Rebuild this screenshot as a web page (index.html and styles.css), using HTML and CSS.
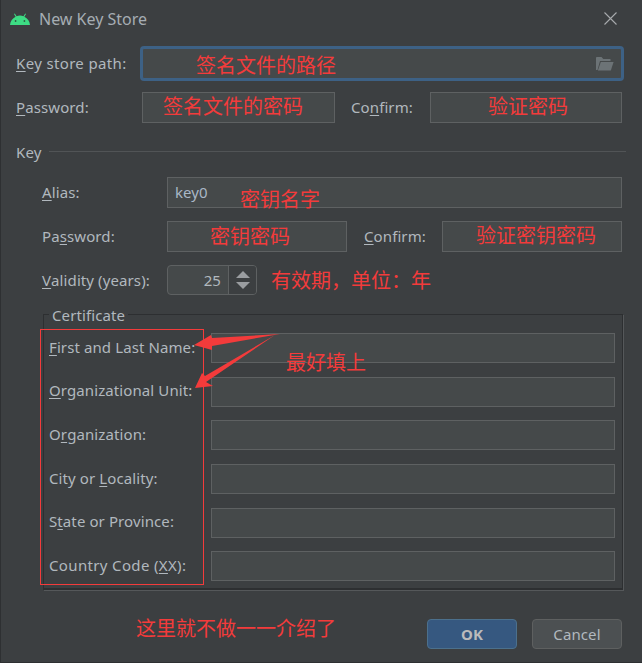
FILE: index.html
```html
<!DOCTYPE html>
<html lang="en">
<head>
<meta charset="utf-8">
<title>New Key Store</title>
<link rel="stylesheet" href="styles.css">
</head>
<body>
<div class="dialog">
  <header class="titlebar">
    <svg class="android" viewBox="0 0 20 12" width="20" height="12" aria-hidden="true">
      <path d="M0 12C0.3 8.2 2.5 5.2 5.6 3.7L4 0.9 4.8 0.4 6.5 3.3C7.6 2.8 8.8 2.6 10 2.6S12.4 2.8 13.5 3.3L15.2 0.4 16 0.9 14.4 3.7C17.5 5.2 19.7 8.2 20 12Z" fill="#3ddc84"/>
      <circle cx="5.6" cy="8" r="0.9" fill="#2f5f46"/>
      <circle cx="14.4" cy="8" r="0.9" fill="#2f5f46"/>
    </svg>
    <span class="title">New Key Store</span>
    <svg class="close" viewBox="0 0 13 13" width="13" height="13" aria-hidden="true">
      <path d="M0.5 0.5L12.5 12.5M12.5 0.5L0.5 12.5" stroke="#a8abad" stroke-width="1.1" fill="none"/>
    </svg>
  </header>

  <main class="form">
    <section class="store-grid">
      <label class="lbl wide"><u>K</u>ey store path:</label>
      <div class="field focus span-rest">
        <svg class="folder" viewBox="0 0 19 15" width="19" height="15" aria-hidden="true">
          <path d="M1 14V2.2C1 1.5 1.4 1 2 1H6.5L8.3 3H15.5V5H5L2.5 14Z" fill="#6c7376"/>
          <path d="M5.8 6H18.6L15.8 14.6H2.9Z" fill="#6c7376"/>
        </svg>
      </div>
      <label class="lbl"><u>P</u>assword:</label>
      <div class="field"></div>
      <label class="lbl pad-left">Co<u>n</u>firm:</label>
      <div class="field"></div>
    </section>

    <div class="group-head"><span>Key</span><i class="rule"></i></div>

    <section class="key-block">
      <div class="key-grid">
        <label class="lbl"><u>A</u>lias:</label>
        <div class="field value span-rest">key0</div>
        <label class="lbl">Pa<u>s</u>sword:</label>
        <div class="field"></div>
        <label class="lbl pad-left"><u>C</u>onfirm:</label>
        <div class="field"></div>
        <label class="lbl"><u>V</u>alidity (years):</label>
        <div class="spinner">
          <span class="spin-value">25</span>
          <span class="spin-btns"><i class="up"></i><i class="down"></i></span>
        </div>
      </div>

      <div class="cert">
        <span class="legend">Certificate</span>
        <div class="cert-grid">
          <label class="lbl"><u>F</u>irst and Last Name:</label><div class="field short"></div>
          <label class="lbl"><u>O</u>rganizational Unit:</label><div class="field short"></div>
          <label class="lbl">O<u>r</u>ganization:</label><div class="field short"></div>
          <label class="lbl">City or <u>L</u>ocality:</label><div class="field short"></div>
          <label class="lbl">S<u>t</u>ate or Province:</label><div class="field short"></div>
          <label class="lbl wide">Country Code (<u>X</u>X):</label><div class="field short"></div>
        </div>
      </div>
    </section>

    <footer class="actions">
      <button class="btn ok" type="button">OK</button>
      <button class="btn" type="button">Cancel</button>
    </footer>
  </main>

  <div class="notes">
    <span class="note n-path">签名文件的路径</span>
    <span class="note n-pass">签名文件的密码</span>
    <span class="note n-conf">验证密码</span>
    <span class="note n-alias">密钥名字</span>
    <span class="note n-kpass">密钥密码</span>
    <span class="note n-kconf">验证密钥密码</span>
    <span class="note n-valid">有效期，单位：年</span>
    <span class="note n-best">最好填上</span>
    <span class="note n-skip">这里就不做一一介绍了</span>
    <div class="red-box"></div>
    <svg class="arrows" viewBox="0 0 642 663" width="642" height="663" aria-hidden="true">
      <path d="M194 345L211 335 212 338 280 334 212 346 212 350Z" fill="#f33b3b"/>
      <path d="M195 388L202 373 205 376 275 335 206 382 213 386Z" fill="#f33b3b"/>
    </svg>
  </div>
</div>
</body>
</html>
```
FILE: styles.css
```css
* { box-sizing: border-box; }
html, body { margin: 0; padding: 0; }
body {
  width: 642px;
  height: 663px;
  overflow: hidden;
  background: #3c3f41;
  color: #b1b8be;
  font-family: "Noto Sans", "Open Sans", "Noto Sans CJK SC", sans-serif;
  font-size: 15px;
  letter-spacing: 0.1px;
}
.dialog {
  position: relative;
  width: 642px;
  height: 663px;
  box-shadow: inset 1px 0 0 #2e3032, inset 0 -1px 0 #2e3032;
}
.titlebar {
  display: flex;
  align-items: center;
  height: 37px;
  padding: 0 25px 0 10px;
}
.title { margin-left: 9px; flex: 1; color: #a6adb3; font-size: 16px; letter-spacing: 0; }
.close { display: block; }

.form { padding: 11px 20px 0 16px; }
.store-grid {
  display: grid;
  grid-template-columns: 126px 193px 95px 192px;
  grid-auto-rows: 31px;
  row-gap: 13px;
}
.lbl {
  display: flex;
  align-items: center;
  white-space: pre;
  line-height: 18px;
  padding-bottom: 1px;
}
.lbl u { text-underline-offset: 2px; }
.wide { letter-spacing: 0.35px; }
.pad-left { padding-left: 16px; }
.field {
  display: flex;
  align-items: center;
  height: 31px;
  background: #45494a;
  border: 1px solid #5e6162;
}
.span-rest { grid-column: 2 / -1; }
.focus {
  justify-content: flex-end;
  padding-right: 7px;
  border-color: #3d6185;
  border-radius: 2px;
  box-shadow: 0 0 0 2px #3d6185;
}
.folder { display: block; }
.value { padding-left: 7px; padding-bottom: 1px; color: #a9b7c6; }

.group-head {
  display: flex;
  align-items: center;
  gap: 8px;
  height: 18px;
  margin-top: 20px;
}
.rule { flex: 1; height: 1px; margin-right: -4px; margin-top: -2px; background: #515456; }

.key-block { padding-left: 26px; margin-top: 16px; }
.key-grid {
  display: grid;
  grid-template-columns: 125px 180px 95px 180px;
  grid-auto-rows: 31px;
  row-gap: 13px;
}
.key-grid .lbl { padding-bottom: 2px; }
.key-grid .pad-left { padding-left: 17px; }
.spinner {
  display: flex;
  width: 90px;
  height: 30px;
  background: #45494a;
  border: 1px solid #5e6162;
  border-radius: 4px;
}
.spin-value {
  width: 61px;
  padding-right: 7px;
  text-align: right;
  line-height: 28px;
  border-right: 1px solid #5e6162;
}
.spin-btns {
  display: flex;
  flex: 1;
  flex-direction: column;
  align-items: center;
  justify-content: center;
  gap: 4px;
  background: #3c3f41;
  border-radius: 0 3px 3px 0;
}
.up, .down { width: 0; height: 0; border-left: 7px solid transparent; border-right: 7px solid transparent; }
.up { border-bottom: 7px solid #9a9da0; }
.down { border-top: 7px solid #9a9da0; }

.cert {
  position: relative;
  width: 580px;
  height: 276px;
  margin: 18px 0 0 1px;
  padding: 18px 7px 0 5px;
  border: 1px solid #2d2f31;
  border-bottom-width: 2px;
  box-shadow: 1px 1px 0 #55585a;
}
.legend {
  position: absolute;
  top: -9px;
  left: 5px;
  padding: 0 3px;
  line-height: 18px;
  background: #3c3f41;
}
.cert-grid {
  display: grid;
  grid-template-columns: 162px 404px;
  row-gap: 13.7px;
}
.cert-grid .lbl { padding-bottom: 3px; }
.short { height: 30px; }

.actions {
  display: flex;
  justify-content: flex-end;
  gap: 15px;
  margin-top: 29px;
}
.btn {
  width: 90px;
  height: 30px;
  padding: 0;
  font: inherit;
  letter-spacing: inherit;
  color: #b1b8be;
  background: #4c5052;
  border: 1px solid #5e6060;
  border-radius: 4px;
}
.ok {
  font-weight: 700;
  color: #bbbbbb;
  background: #365880;
  border-color: #4c708c;
}

.notes { position: absolute; inset: 0; pointer-events: none; }
.note {
  position: absolute;
  color: #f33b3b;
  font-family: "Noto Sans CJK SC", sans-serif;
  font-size: 20px;
  letter-spacing: 0;
  line-height: 24px;
  white-space: nowrap;
}
.n-path { left: 196px; top: 53px; }
.n-pass { left: 163px; top: 94px; }
.n-conf { left: 488px; top: 94px; }
.n-alias { left: 240px; top: 187px; }
.n-kpass { left: 210px; top: 224px; }
.n-kconf { left: 476px; top: 223px; }
.n-valid { left: 271px; top: 268px; }
.n-best { left: 286px; top: 350px; }
.n-skip { left: 136px; top: 616px; }
.red-box {
  position: absolute;
  left: 40px;
  top: 329px;
  width: 164px;
  height: 256px;
  border: 1px solid #f33b3b;
}
.arrows { position: absolute; left: 0; top: 0; }
```
